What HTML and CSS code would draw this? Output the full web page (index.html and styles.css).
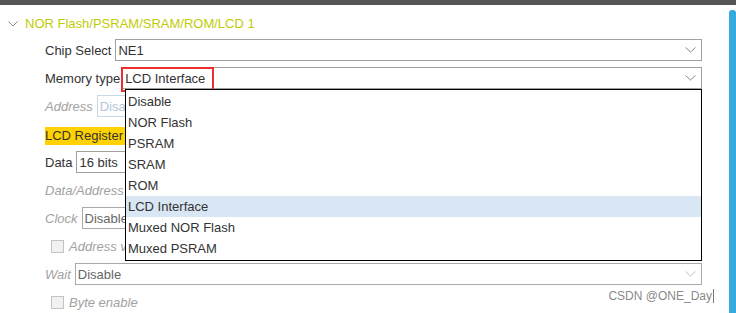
FILE: index.html
```html
<!DOCTYPE html>
<html>
<head>
<meta charset="utf-8">
<link rel="stylesheet" href="styles.css">
</head>
<body>
<div class="topbar"></div>
<div class="main">
  <div class="panel">
    <div class="header">
      <svg class="caret" width="10" height="6" viewBox="0 0 10 6"><path d="M0.5 0.5 L5 5 L9.5 0.5" fill="none" stroke="#8a8a8a" stroke-width="1"/></svg>
      <span class="title">NOR Flash/PSRAM/SRAM/ROM/LCD 1</span>
    </div>
    <div class="rows">
      <div class="row">
        <span class="label">Chip Select</span>
        <div class="select"><span class="val">NE1</span><svg class="chev" width="11" height="6" viewBox="0 0 11 6"><path d="M0.5 0.5 L5.5 5 L10.5 0.5" fill="none" stroke="#888" stroke-width="1"/></svg></div>
      </div>
      <div class="row">
        <span class="label">Memory type</span>
        <div class="select mt"><span class="val">LCD Interface</span><svg class="chev" width="11" height="6" viewBox="0 0 11 6"><path d="M0.5 0.5 L5.5 5 L10.5 0.5" fill="none" stroke="#888" stroke-width="1"/></svg></div>
      </div>
      <div class="row">
        <span class="label dis">Address</span>
        <div class="select off"><span class="val">Disable</span></div>
      </div>
      <div class="row">
        <span class="section">LCD Register</span>
      </div>
      <div class="row">
        <span class="label">Data</span>
        <div class="select"><span class="val">16 bits</span></div>
      </div>
      <div class="row">
        <span class="label dis">Data/Address</span>
      </div>
      <div class="row">
        <span class="label dis">Clock</span>
        <div class="select grey"><span class="val">Disable</span></div>
      </div>
      <div class="row check">
        <span class="box"></span>
        <span class="label dis">Address valid</span>
      </div>
      <div class="row">
        <span class="label dis">Wait</span>
        <div class="select grey"><span class="val">Disable</span><svg class="chev" width="11" height="6" viewBox="0 0 11 6"><path d="M0.5 0.5 L5.5 5 L10.5 0.5" fill="none" stroke="#c4c4c4" stroke-width="1"/></svg></div>
      </div>
      <div class="row check">
        <span class="box"></span>
        <span class="label dis">Byte enable</span>
      </div>
    </div>
    <div class="redbox"></div>
    <ul class="list">
      <li>Disable</li>
      <li>NOR Flash</li>
      <li>PSRAM</li>
      <li>SRAM</li>
      <li>ROM</li>
      <li class="sel">LCD Interface</li>
      <li>Muxed NOR Flash</li>
      <li>Muxed PSRAM</li>
    </ul>
    <div class="mark">CSDN @ONE_Day<span class="cursor"></span></div>
  </div>
  <div class="track"><div class="thumb"></div></div>
</div>
</body>
</html>
```
FILE: styles.css
```css
html, body {
  margin: 0;
  padding: 0;
  background: #fff;
  width: 736px;
  height: 313px;
  overflow: hidden;
  font-family: "Liberation Sans", Arial, sans-serif;
  font-size: 13px;
  color: #333;
}
.topbar {
  height: 5px;
  background: #555;
}
.main {
  display: flex;
  height: 308px;
}
.panel {
  flex: 1;
  position: relative;
  padding-right: 27px;
}
.header {
  height: 32px;
  padding-top: 2px;
  display: flex;
  align-items: center;
  padding-left: 8px;
}
.caret {
  margin-right: 7px;
  margin-top: 1px;
}
.title {
  color: #bfcc05;
}
.rows {
  display: flex;
  flex-direction: column;
  gap: 6px;
  padding-left: 45px;
}
.row {
  height: 22px;
  display: flex;
  align-items: center;
  gap: 4px;
}
.label {
  white-space: nowrap;
  color: #333;
}
.label.dis {
  color: #a2a2a2;
  font-style: italic;
}
.select {
  flex: 1;
  height: 20px;
  border: 1px solid #a0a0a0;
  display: flex;
  align-items: center;
  padding-left: 2px;
  padding-right: 5px;
  background: #fff;
}
.select .val {
  flex: 1;
}
.select.mt {
  margin-left: -2px;
}
.select.off {
  border-color: #c9d8e7;
  color: #b3c6d8;
}
.select.grey {
  border-color: #a9a9a9;
  color: #666;
}
.section {
  background: #ffd200;
  padding: 0 5px 0 0;
  height: 18px;
  line-height: 18px;
  margin-top: 4px;
}
.check {
  padding-left: 6px;
  gap: 5px;
}
.box {
  width: 11px;
  height: 11px;
  border: 1px solid #c3c3c3;
  background: #f1f1f1;
}
.redbox {
  position: absolute;
  left: 121px;
  top: 62px;
  width: 89px;
  height: 21px;
  border: 2px solid #ee2e2e;
}
.list {
  position: absolute;
  left: 125px;
  top: 84px;
  width: 575px;
  margin: 0;
  padding: 1px 0 0 0;
  list-style: none;
  border: 1px solid #000;
  background: #fff;
  height: 169px;
  box-sizing: content-box;
}
.list li {
  height: 21px;
  line-height: 21px;
  padding-left: 2px;
  color: #333;
}
.list li.sel {
  background: #d9e7f4;
}
.mark {
  position: absolute;
  right: 15px;
  top: 284px;
  font-size: 12px;
  color: #8a8a8a;
  display: flex;
  align-items: center;
}
.cursor {
  width: 1px;
  height: 14px;
  background: #777;
  margin-left: 1px;
}
.track {
  width: 7px;
  padding-top: 5px;
  display: flex;
}
.thumb {
  flex: 1;
  background: #36a9df;
  border-radius: 3px 3px 0 0;
}
```
